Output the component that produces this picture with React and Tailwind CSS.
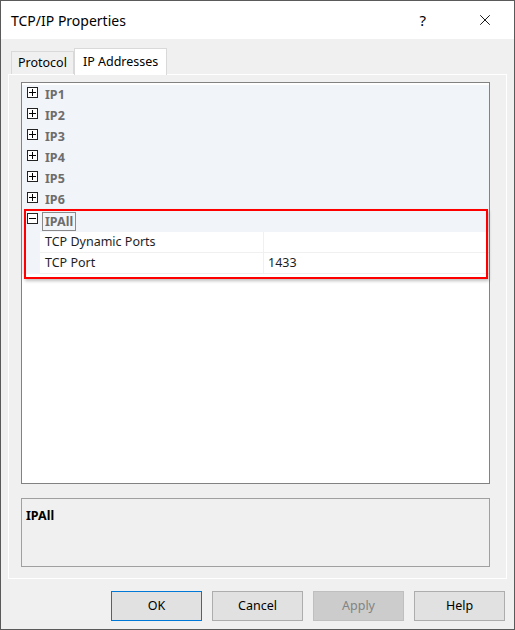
import { X } from "lucide-react";

const FONT = { fontFamily: '"Segoe UI", "Noto Sans", "Open Sans", sans-serif' };

function PlusBox({ open }) {
  return (
    <svg width="11" height="11" viewBox="0 0 11 11" className="shrink-0">
      <rect x="0.5" y="0.5" width="10" height="10" fill="white" stroke="#222" />
      <line x1="2" y1="5.5" x2="9" y2="5.5" stroke="#000" />
      {!open && <line x1="5.5" y1="2" x2="5.5" y2="9" stroke="#000" />}
    </svg>
  );
}

function Category({ label, open, focused }) {
  return (
    <div className="flex h-[21px] items-center bg-[#f1f4f9]">
      <div className="flex w-[18px] justify-center self-start pt-[2px] pl-[2px]">
        <PlusBox open={open} />
      </div>
      <span
        className={`ml-[2px] text-[12.5px] font-bold text-[#6d6d6d] ${
          focused ? "border border-[#8a8a8a] px-[2px] leading-[17px]" : "pl-[3px]"
        }`}
      >
        {label}
      </span>
    </div>
  );
}

function Prop({ name, value }) {
  return (
    <div className="flex h-[21px] text-[12.5px] text-[#1e1e1e]">
      <div className="w-[18px] bg-[#f1f4f9]" />
      <div className="flex w-[223px] items-center border-b border-[#f0f0f0] bg-white pl-[5px]">{name}</div>
      <div className="flex flex-1 items-center border-b border-l border-[#f0f0f0] bg-white pl-[4px]">{value}</div>
    </div>
  );
}

function Btn({ children, primary, disabled }) {
  return (
    <button
      className={`h-[30px] w-[91px] border text-[12.5px] ${
        disabled
          ? "border-[#bfbfbf] bg-[#cccccc] text-[#838383]"
          : primary
          ? "border-[#0078d7] bg-[#e1e1e1] text-black"
          : "border-[#adadad] bg-[#e1e1e1] text-black"
      }`}
    >
      {children}
    </button>
  );
}

export default function App() {
  return (
    <div style={FONT} className="flex h-[630px] w-[515px] flex-col border border-[#5a5a5a] bg-[#f0f0f0]">
      <div className="flex h-[38px] items-center bg-white pl-[10px]">
        <span className="text-[14px] text-black">TCP/IP Properties</span>
        <span className="ml-auto mr-[50px] text-[15px] text-black">?</span>
        <X size={18} strokeWidth={1.2} className="mr-[20px] text-black" />
      </div>

      <div className="px-[7px] pt-[8px]">
        <div className="flex h-[27px] items-end pl-[3px]">
          <div className="flex h-[23px] items-center border border-b-0 border-[#d9d9d9] px-[6px] text-[12.5px] text-black">
            Protocol
          </div>
          <div className="-mb-px flex h-[27px] items-center border border-b-0 border-[#d9d9d9] bg-white px-[8px] text-[12.5px] text-black">
            IP Addresses
          </div>
        </div>

        <div className="flex h-[505px] flex-col border border-white bg-[#f0f0f0] pt-[7px] pl-[12px] pr-[15px]">
          <div className="relative h-[402px] w-[469px] border border-[#828282] bg-white pt-[2px]">
            <Category label="IP1" />
            <Category label="IP2" />
            <Category label="IP3" />
            <Category label="IP4" />
            <Category label="IP5" />
            <Category label="IP6" />
            <Category label="IPAll" open focused />
            <Prop name="TCP Dynamic Ports" value="" />
            <Prop name="TCP Port" value="1433" />
            <div className="absolute left-[2px] top-[126px] h-[70px] w-[464px] border-2 border-[#ff0000] shadow-[1px_2px_3px_rgba(0,0,0,0.25)]" />
          </div>

          <div className="mt-[14px] h-[69px] w-[469px] border border-[#a0a0a0] bg-[#f0f0f0] px-[4px] pt-[3px]">
            <span className="text-[12.5px] font-bold text-black">IPAll</span>
          </div>
        </div>
      </div>

      <div className="mt-[12px] flex justify-end gap-[10px] pr-[9px]">
        <Btn primary>OK</Btn>
        <Btn>Cancel</Btn>
        <Btn disabled>Apply</Btn>
        <Btn>Help</Btn>
      </div>
    </div>
  );
}
